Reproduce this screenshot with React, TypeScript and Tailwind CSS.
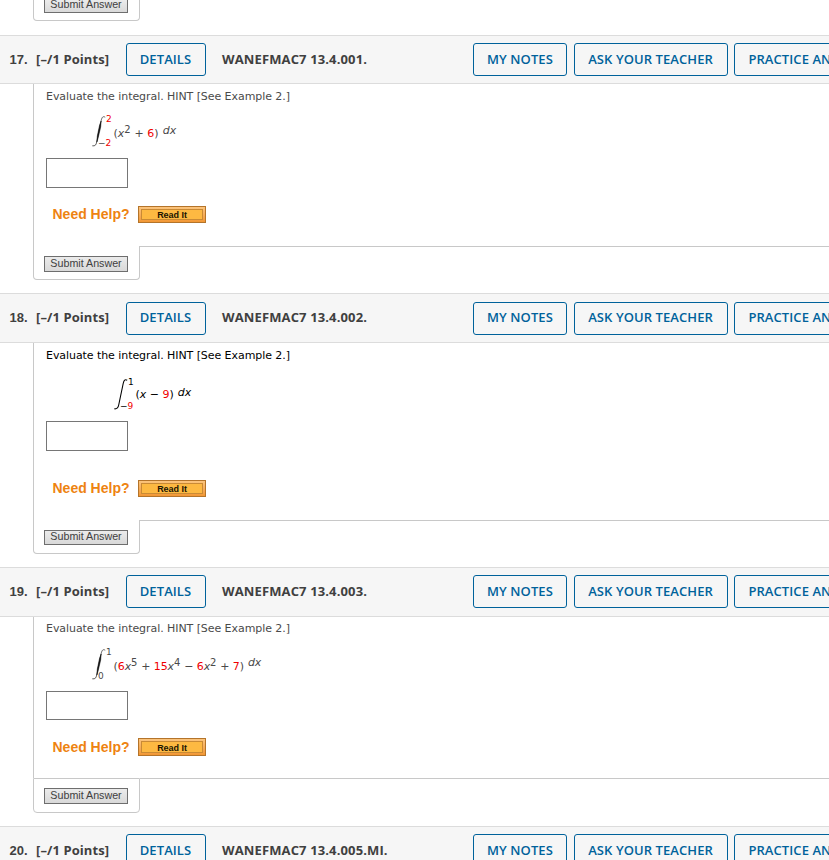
import type { ReactNode } from "react";

type Tone = "gray" | "black";

const toneClass: Record<Tone, string> = {
  gray: "text-[#4a4a4a]",
  black: "text-black",
};

function ActionButton({ className, children }: { className: string; children: ReactNode }) {
  return (
    <button
      className={`h-[33px] shrink-0 whitespace-nowrap rounded-[3px] border border-[#00629b] text-[13px] font-semibold tracking-[0.08px] text-[#00629b] ${className}`}
    >
      {children}
    </button>
  );
}

function QuestionHeader({
  number,
  code,
  className,
  textClass = "leading-[33px] [&>button]:leading-[31px]",
}: {
  number: string;
  code: string;
  className: string;
  textClass?: string;
}) {
  return (
    <header
      className={`flex shrink-0 items-start overflow-hidden border-y border-[#dcdcdc] bg-[#f6f6f6] pl-[9px] font-['Open_Sans',sans-serif] text-[13px] font-bold text-[#404040] ${textClass} ${className}`}
    >
      <span className="w-[27px] shrink-0 pl-[0.4px] tracking-[0.1px] font-['Liberation_Sans',sans-serif]">
        {number}.
      </span>
      <span className="w-[90px] shrink-0 tracking-[0.08px] whitespace-nowrap">[–/1 Points]</span>
      <ActionButton className="w-[80px] pr-px">DETAILS</ActionButton>
      <span className="ml-4 w-[251px] shrink-0 tracking-[0.13px] whitespace-nowrap">{code}</span>
      <ActionButton className="w-[94px]">MY NOTES</ActionButton>
      <ActionButton className="ml-[7px] w-[154px] pr-px">ASK YOUR TEACHER</ActionButton>
      <ActionButton className="ml-[6px] w-[170px] pl-[13.4px] text-left">PRACTICE ANOTHER</ActionButton>
    </header>
  );
}

function Red({ children }: { children: ReactNode }) {
  return <span className="text-[#f00000]">{children}</span>;
}

function Sup({ children }: { children: ReactNode }) {
  return <span className="inline-block w-[6.7px] -translate-y-[4px] text-[10px]">{children}</span>;
}

function IntegralSign({ bold }: { bold: boolean }) {
  return (
    <svg className="block h-8 w-[14px] shrink-0" viewBox="0 0 14 32" fill="none" stroke="currentColor">
      <path
        d="M13.2 2.2C11 1 10 2 9.2 5.5L4.7 27C4.1 30 3.2 31.2.3 30.8"
        strokeWidth={bold ? "0.9" : "1.1"}
      />
      {bold && <path d="M9.1 6L8.7 12 6.1 23 4.9 27 5.3 21 7.6 10Z" strokeWidth=".5" stroke="#151515" fill="#151515" />}
    </svg>
  );
}

function Integral({
  upper,
  lower,
  bold = false,
  bodyClass = "mt-3",
  dxClass,
  className,
  children,
}: {
  upper: ReactNode;
  lower: ReactNode;
  bold?: boolean;
  bodyClass?: string;
  dxClass: string;
  className: string;
  children: ReactNode;
}) {
  return (
    <div className={`flex h-8 shrink-0 items-start whitespace-pre text-[11px] leading-[13px] ${className}`}>
      <IntegralSign bold={bold} />
      <span className="-ml-[8px] flex h-[33px] w-[15.5px] shrink-0 flex-col justify-between text-[9px] leading-[9px]">
        <span className="pl-2">{upper}</span>
        <span>{lower}</span>
      </span>
      <span className={bodyClass}>{children}</span>
      <span className={`italic ${dxClass}`}>dx</span>
    </div>
  );
}

function NeedHelp({ buttonClass, className }: { buttonClass: string; className: string }) {
  return (
    <div className={`flex shrink-0 items-start pl-[6.5px] font-['Liberation_Sans',sans-serif] font-bold ${className}`}>
      <span className="w-[85.5px] shrink-0 text-[14px] whitespace-nowrap text-[#ee8311]">Need Help?</span>
      <button
        className={`flex w-[68px] shrink-0 border border-[#b4742a] bg-linear-to-b from-[#fbc47c] to-[#f29733] p-[2px] text-[9px] tracking-[-0.05px] text-[#201400] ${buttonClass}`}
      >
        <span className="flex h-full w-full items-center justify-center border border-[#c98a35] bg-[#fdb942]">
          <span className="translate-y-px leading-none">Read It</span>
        </span>
      </button>
    </div>
  );
}

function SubmitButton({ className }: { className: string }) {
  return (
    <button
      className={`block w-[84px] border border-[#6e6e6e] bg-linear-to-b from-[#ebebeb] to-[#d9d9d9] text-center font-['Liberation_Sans',sans-serif] text-[10.7px] whitespace-nowrap text-[#404040] ${className}`}
    >
      Submit Answer
    </button>
  );
}

function SubmitTab({
  tabClass,
  buttonClass,
  divided = false,
}: {
  tabClass: string;
  buttonClass: string;
  divided?: boolean;
}) {
  return (
    <div className="flex shrink-0 items-start">
      <div
        className={`w-[107px] shrink-0 rounded-b-[4px] border-x border-b border-[#c8c8c8] pl-[10px] ${divided ? "border-t" : ""} ${tabClass}`}
      >
        <SubmitButton className={buttonClass} />
      </div>
      <div className="h-px flex-1 bg-[#c8c8c8]" />
    </div>
  );
}

function QuestionBody({ tone, className, children }: { tone: Tone; className: string; children: ReactNode }) {
  return (
    <div
      className={`flex shrink-0 flex-col border-l border-[#c8c8c8] pl-3 font-['DejaVu_Sans',sans-serif] text-[11px] ${toneClass[tone]} ${className}`}
    >
      <p className="h-[13px] shrink-0 leading-[13px] tracking-[-0.065px] whitespace-nowrap">
        Evaluate the integral. HINT [See Example 2.]
      </p>
      {children}
    </div>
  );
}

function AnswerBox({ className }: { className: string }) {
  return (
    <input aria-label="Answer" className={`block w-[82px] shrink-0 border border-[#767676] bg-white ${className}`} />
  );
}

export default function App() {
  return (
    <main className="flex h-[860px] w-full flex-col overflow-hidden bg-white">
      <div className="h-[35px] shrink-0 pl-[33px]">
        <div className="h-[21px] w-[107px] rounded-b-[4px] border-x border-b border-[#c8c8c8] pl-[10px]">
          <SubmitButton className="h-[13px] border-t-0 pb-1 leading-[9px]" />
        </div>
      </div>

      <QuestionHeader number="17" code="WANEFMAC7 13.4.001." className="h-[49px] pt-[7px]" />
      <section className="h-[209px] shrink-0 pl-[33px]">
        <QuestionBody tone="gray" className="h-[162px] pt-[6px]">
          <Integral
            upper={<Red>2</Red>}
            lower={<>−<Red>2</Red></>}
            bold
            dxClass="ml-[4.3px] mt-[9px]"
            className="mt-3 ml-[46px]"
          >
            (<i>x</i><Sup>2</Sup> + <Red>6</Red>)
          </Integral>
          <AnswerBox className="mt-[11px] h-[30px]" />
          <NeedHelp className="mt-[18px] leading-[17px]" buttonClass="h-[17px]" />
        </QuestionBody>
        <SubmitTab tabClass="h-[34px] pt-[10px]" buttonClass="h-4 pb-[2px] leading-[12px]" />
      </section>

      <QuestionHeader
        number="18"
        code="WANEFMAC7 13.4.002."
        className="h-[50px] pt-[8px]"
        textClass="leading-[31px] [&>button]:pb-[2px] [&>button]:leading-[29px]"
      />
      <section className="h-[224px] shrink-0 pl-[33px]">
        <QuestionBody tone="black" className="h-[177px] pt-[6px]">
          <Integral
            upper="1"
            lower={<>−<Red>9</Red></>}
            bodyClass="mt-[10px]"
            dxClass="ml-[4px] mt-[8px]"
            className="mt-4 ml-[68px]"
          >
            (<i>x</i> − <Red>9</Red>)
          </Integral>
          <AnswerBox className="mt-[11px] h-[30px]" />
          <NeedHelp className="mt-[29px] leading-[17px]" buttonClass="h-[17px]" />
        </QuestionBody>
        <SubmitTab tabClass="h-[34px] pt-[10px]" buttonClass="h-[15px] pb-[2px] leading-[11px]" />
      </section>

      <QuestionHeader number="19" code="WANEFMAC7 13.4.003." className="h-[50px] pt-[7px]" />
      <section className="h-[209px] shrink-0 pl-[33px]">
        <QuestionBody tone="gray" className="h-[161px] pt-[5px]">
          <Integral
            upper="1"
            lower="0"
            bold
            bodyClass="mt-3 tracking-[-0.08px]"
            dxClass="ml-[4px] mt-[8px]"
            className="mt-[13px] ml-[46px]"
          >
            (<Red>6</Red><i>x</i><Sup>5</Sup> + <Red>15</Red><i>x</i><Sup>4</Sup> − <Red>6</Red><i>x</i><Sup>2</Sup> +{" "}
            <Red>7</Red>)
          </Integral>
          <AnswerBox className="mt-[11px] h-[29px]" />
          <NeedHelp className="mt-[18px] leading-[19px]" buttonClass="h-[18px]" />
        </QuestionBody>
        <SubmitTab divided tabClass="h-[35px] pt-[9px]" buttonClass="h-4 pb-[2px] leading-[12px]" />
      </section>

      <QuestionHeader number="20" code="WANEFMAC7 13.4.005.MI." className="h-[50px] pt-[7px]" />
    </main>
  );
}
